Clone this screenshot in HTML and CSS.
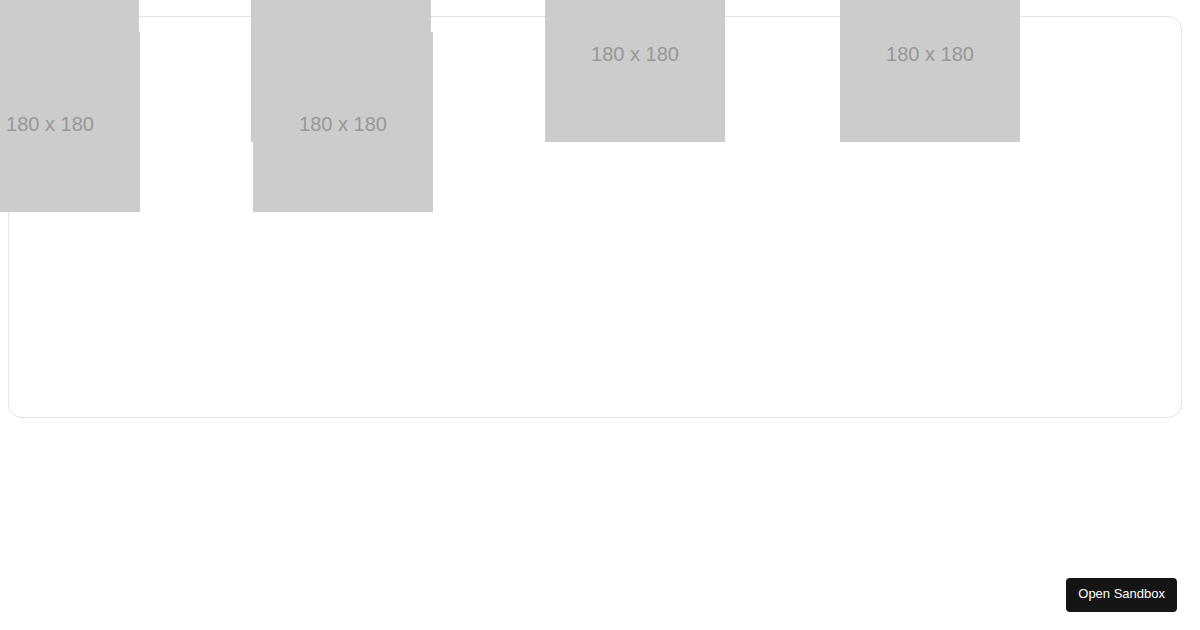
FILE: index.html
```html
<!DOCTYPE html>
<html>
<head>
<meta charset="utf-8">
<link rel="stylesheet" href="styles.css">
</head>
<body>
<div class="card">
  <div class="tile t-a">180 x 180</div>
  <div class="tile t-c">180 x 180</div>
  <div class="tile t-e">180 x 180</div>
  <div class="tile t-f">180 x 180</div>
  <div class="tile t-b">180 x 180</div>
  <div class="tile t-d">180 x 180</div>
</div>
<button class="sandbox-btn">Open Sandbox</button>
</body>
</html>
```
FILE: styles.css
```css
html, body {
  margin: 0;
  padding: 0;
  background: #ffffff;
  font-family: "Liberation Sans", Arial, sans-serif;
}

body {
  padding: 16px 18px 0 8px;
}

.card {
  position: relative;
  height: 400px;
  border: 1px solid #e3e3e3;
  border-radius: 14px;
}

.tile {
  position: absolute;
  box-sizing: border-box;
  width: 180px;
  height: 180px;
  padding-top: 4px;
  background: #cccccc;
  color: #989898;
  font-size: 20px;
  display: flex;
  align-items: center;
  justify-content: center;
}

.t-a { left: -50px; top: -55px; }
.t-b { left: -49px; top: 15px; }
.t-c { left: 242px; top: -55px; }
.t-d { left: 244px; top: 15px; }
.t-e { left: 536px; top: -55px; }
.t-f { left: 831px; top: -55px; }

.sandbox-btn {
  position: fixed;
  right: 23px;
  bottom: 18px;
  box-sizing: border-box;
  height: 34px;
  padding: 0 12px 3px;
  background: #151515;
  color: #ffffff;
  border: none;
  border-radius: 4px;
  font-family: "Liberation Sans", Arial, sans-serif;
  font-size: 13px;
}
```
